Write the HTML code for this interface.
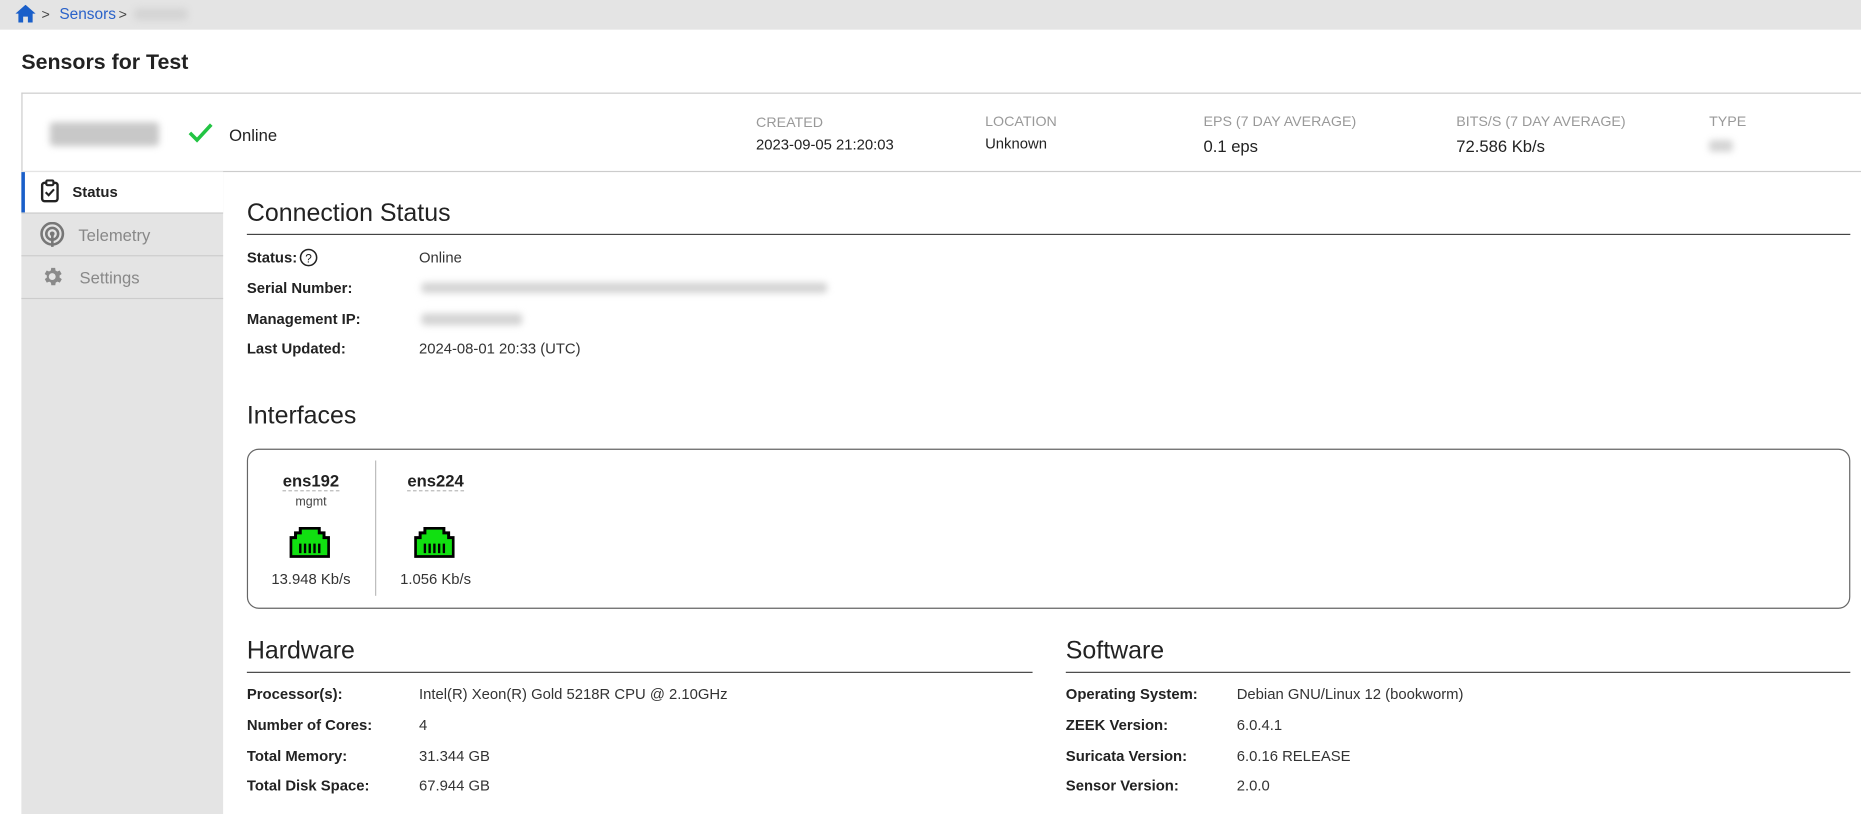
<!DOCTYPE html>
<html><head><meta charset="utf-8"><style>
html,body{margin:0;padding:0;width:1861px;height:814px;overflow:hidden;background:#fff;}
#r{position:absolute;left:0;top:0;width:1568px;height:686px;transform:scale(1.18686);transform-origin:0 0;font-family:"Liberation Sans",sans-serif;color:#222;}
.a{position:absolute;white-space:nowrap;}
.lbl{font-size:12px;color:#999;}
.val{font-size:13px;color:#222;}
.h{font-size:21px;color:#222;}
.rl{font-size:12.5px;font-weight:bold;color:#222;}
.rv{font-size:12.5px;color:#333;}
.blur{background:#d4d4d4;filter:blur(3px);border-radius:3px;}
</style></head><body><div id="r">
<div class="a" style="left:0;top:0;width:1568px;height:25px;background:#e4e4e4"></div>
<svg class="a" style="left:13px;top:4px" width="17" height="15" viewBox="0 0 17 15"><path d="M8.5 0 L17 7.5 H14.5 V15 H10.5 V10 H6.5 V15 H2.5 V7.5 H0 Z" fill="#1a5fc9"/></svg>
<div class="a" style="left:35px;top:5px;font-size:12px;color:#444">&gt;</div>
<div class="a" style="left:50px;top:4px;font-size:13px;color:#2a62c9">Sensors</div>
<div class="a" style="left:100px;top:5px;font-size:12px;color:#444">&gt;</div>
<div class="a blur" style="left:113px;top:7px;width:45px;height:10px"></div>
<div class="a" style="left:18px;top:42px;font-size:18px;font-weight:bold;color:#222">Sensors for Test</div>
<div class="a" style="left:18px;top:78px;width:1560px;height:65px;border:1px solid #ccc;border-right:none"></div>
<div class="a blur" style="left:42px;top:103px;width:92px;height:20px;background:#c8c8c8"></div>
<svg class="a" style="left:158px;top:103px" width="22" height="18" viewBox="0 0 22 18"><path d="M2 9 L8 15 L20 2" fill="none" stroke="#22c443" stroke-width="3"/></svg>
<div class="a" style="left:193px;top:106px;font-size:14px">Online</div>
<div class="a lbl" style="left:637px;top:96px">CREATED</div><div class="a val" style="left:637px;top:115px;font-size:12.5px">2023-09-05 21:20:03</div>
<div class="a lbl" style="left:830px;top:95px">LOCATION</div><div class="a val" style="left:830px;top:114px;font-size:12.5px">Unknown</div>
<div class="a lbl" style="left:1014px;top:95px">EPS (7 DAY AVERAGE)</div><div class="a val" style="left:1014px;top:115px;font-size:14px">0.1 eps</div>
<div class="a lbl" style="left:1227px;top:95px">BITS/S (7 DAY AVERAGE)</div><div class="a val" style="left:1227px;top:115px;font-size:14px">72.586 Kb/s</div>
<div class="a lbl" style="left:1440px;top:95px">TYPE</div><div class="a blur" style="left:1440px;top:118px;width:20px;height:10px"></div>
<div class="a" style="left:18px;top:144px;width:170px;height:542px;background:#e4e4e4"></div>
<div class="a" style="left:18px;top:145px;width:170px;height:34px;background:#fff;border-left:3px solid #1a5fc9;box-sizing:border-box"></div>
<div class="a" style="left:18px;top:179px;width:170px;height:1px;background:#ccc"></div>
<div class="a" style="left:18px;top:215px;width:170px;height:1px;background:#ccc"></div>
<div class="a" style="left:18px;top:251px;width:170px;height:1px;background:#ccc"></div>
<svg class="a" style="left:34px;top:151px" width="16" height="20" viewBox="0 0 16 20"><rect x="1.5" y="3" width="13" height="15.5" rx="2" fill="none" stroke="#222" stroke-width="2"/><rect x="5" y="1" width="6" height="4" rx="1" fill="#fff" stroke="#222" stroke-width="1.8"/><path d="M4.5 11 L7 13.5 L11.5 8.5" fill="none" stroke="#222" stroke-width="1.8"/></svg>
<div class="a" style="left:61px;top:155px;font-size:12.5px;font-weight:bold">Status</div>
<svg class="a" style="left:33px;top:187px" width="22" height="22" viewBox="0 0 22 22"><circle cx="11" cy="10" r="9" fill="none" stroke="#777" stroke-width="2.2"/><circle cx="11" cy="10" r="5" fill="none" stroke="#777" stroke-width="2.2"/><circle cx="11" cy="10" r="2" fill="#777"/><rect x="10" y="10" width="2.2" height="11" fill="#777"/><rect x="6" y="4" width="10" height="8" fill="#e4e4e4" opacity="0"/></svg>
<div class="a" style="left:66px;top:190px;font-size:14px;color:#888">Telemetry</div>
<svg class="a" style="left:34px;top:223px" width="20" height="20" viewBox="0 0 24 24"><path fill="#8a8a8a" d="M19.4 13a7.5 7.5 0 000-2l2.1-1.6-2-3.5-2.5 1a7 7 0 00-1.7-1L15 3.2h-4l-.4 2.7a7 7 0 00-1.7 1l-2.5-1-2 3.5L6.6 11a7.5 7.5 0 000 2l-2.1 1.6 2 3.5 2.5-1a7 7 0 001.7 1l.4 2.7h4l.4-2.7a7 7 0 001.7-1l2.5 1 2-3.5zM12 15.5a3.5 3.5 0 110-7 3.5 3.5 0 010 7z"/></svg>
<div class="a" style="left:67px;top:226px;font-size:14px;color:#888">Settings</div>
<div class="a h" style="left:208px;top:168px">Connection Status</div>
<div class="a" style="left:208px;top:197px;width:1351px;height:1px;background:#444"></div>
<div class="a rl" style="left:208px;top:210px">Status:</div>
<svg class="a" style="left:252px;top:209px" width="16" height="16" viewBox="0 0 16 16"><circle cx="8" cy="8" r="6.8" fill="none" stroke="#222" stroke-width="1.3"/><text x="8" y="12" font-size="10" text-anchor="middle" font-family="Liberation Sans" fill="#222">?</text></svg>
<div class="a rv" style="left:353px;top:210px">Online</div>
<div class="a rl" style="left:208px;top:236px">Serial Number:</div><div class="a blur" style="left:355px;top:238px;width:342px;height:9px"></div>
<div class="a rl" style="left:208px;top:262px">Management IP:</div><div class="a blur" style="left:355px;top:264px;width:85px;height:10px"></div>
<div class="a rl" style="left:208px;top:287px">Last Updated:</div><div class="a rv" style="left:353px;top:287px">2024-08-01 20:33 (UTC)</div>
<div class="a h" style="left:208px;top:339px">Interfaces</div>
<div class="a" style="left:208px;top:378px;width:1349px;height:133px;border:1px solid #666;border-radius:10px"></div>
<div class="a" style="left:316px;top:388px;width:1px;height:114px;background:#bbb"></div>
<div class="a" style="left:222px;top:397px;width:80px;text-align:center;font-size:14px;font-weight:bold"><span style="border-bottom:1px dashed #bbb">ens192</span></div>
<div class="a" style="left:222px;top:417px;width:80px;text-align:center;font-size:10.5px;color:#444">mgmt</div>
<div class="a" style="left:327px;top:397px;width:80px;text-align:center;font-size:14px;font-weight:bold"><span style="border-bottom:1px dashed #bbb">ens224</span></div>
<svg class="a" style="left:244px;top:444px" width="34" height="26" viewBox="0 0 34 26"><path d="M9 1 H25 V5 H29 V9 H33 V25 H1 V9 H5 V5 H9 Z" fill="#11e011" stroke="#000" stroke-width="2.5"/><path d="M9 14 V22 M13 14 V22 M17 14 V22 M21 14 V22 M25 14 V22" stroke="#000" stroke-width="2"/></svg>
<svg class="a" style="left:349px;top:444px" width="34" height="26" viewBox="0 0 34 26"><path d="M9 1 H25 V5 H29 V9 H33 V25 H1 V9 H5 V5 H9 Z" fill="#11e011" stroke="#000" stroke-width="2.5"/><path d="M9 14 V22 M13 14 V22 M17 14 V22 M21 14 V22 M25 14 V22" stroke="#000" stroke-width="2"/></svg>
<div class="a rv" style="left:212px;top:481px;width:100px;text-align:center">13.948 Kb/s</div>
<div class="a rv" style="left:317px;top:481px;width:100px;text-align:center">1.056 Kb/s</div>
<div class="a h" style="left:208px;top:537px">Hardware</div>
<div class="a" style="left:208px;top:566px;width:662px;height:1px;background:#444"></div>
<div class="a h" style="left:898px;top:537px">Software</div>
<div class="a" style="left:898px;top:566px;width:661px;height:1px;background:#444"></div>
<div class="a rl" style="left:208px;top:578px">Processor(s):</div><div class="a rv" style="left:353px;top:578px">Intel(R) Xeon(R) Gold 5218R CPU @ 2.10GHz</div>
<div class="a rl" style="left:208px;top:604px">Number of Cores:</div><div class="a rv" style="left:353px;top:604px">4</div>
<div class="a rl" style="left:208px;top:630px">Total Memory:</div><div class="a rv" style="left:353px;top:630px">31.344 GB</div>
<div class="a rl" style="left:208px;top:655px">Total Disk Space:</div><div class="a rv" style="left:353px;top:655px">67.944 GB</div>
<div class="a rl" style="left:898px;top:578px">Operating System:</div><div class="a rv" style="left:1042px;top:578px">Debian GNU/Linux 12 (bookworm)</div>
<div class="a rl" style="left:898px;top:604px">ZEEK Version:</div><div class="a rv" style="left:1042px;top:604px">6.0.4.1</div>
<div class="a rl" style="left:898px;top:630px">Suricata Version:</div><div class="a rv" style="left:1042px;top:630px">6.0.16 RELEASE</div>
<div class="a rl" style="left:898px;top:655px">Sensor Version:</div><div class="a rv" style="left:1042px;top:655px">2.0.0</div>
</div></body></html>
